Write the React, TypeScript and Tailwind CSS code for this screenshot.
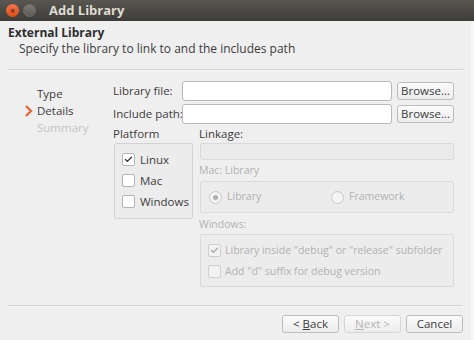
import { Check } from "lucide-react";

const font = { fontFamily: '"Open Sans", "Noto Sans", "DejaVu Sans", sans-serif' };

function Button({ children, disabled, className = "" }: { children: React.ReactNode; disabled?: boolean; className?: string }) {
  return (
    <div
      className={`flex items-center justify-center whitespace-nowrap rounded-[3px] border bg-gradient-to-b from-[#fbfbfb] to-[#ececec] text-[11.5px] ${
        disabled ? "border-[#d6d6d6] text-[#b4b4b4]" : "border-[#bdbdbd] text-[#3c3c3c]"
      } ${className}`}
    >
      {children}
    </div>
  );
}

function CheckBox({ checked, disabled }: { checked?: boolean; disabled?: boolean }) {
  return (
    <span
      className={`flex h-[13px] w-[13px] shrink-0 items-center justify-center rounded-[2px] border ${
        disabled ? "border-[#cfcfcf] bg-[#f2f2f2]" : "border-[#b5b5b5] bg-white"
      }`}
    >
      {checked && <Check className={`h-[9px] w-[9px] ${disabled ? "text-[#a8a8a8]" : "text-[#333]"}`} strokeWidth={3.5} />}
    </span>
  );
}

function Radio({ checked }: { checked?: boolean }) {
  return (
    <span className="flex h-[13px] w-[13px] shrink-0 items-center justify-center rounded-full border border-[#c8c8c8] bg-[#f4f4f4]">
      {checked && <span className="h-[5px] w-[5px] rounded-full bg-[#b0b0b0]" />}
    </span>
  );
}

export default function App() {
  return (
    <div className="flex h-[340px] w-[474px] flex-col overflow-hidden bg-[#efefef] text-[#3c3c3c]" style={font}>
      {/* title bar */}
      <div className="flex h-[21px] shrink-0 items-center bg-gradient-to-b from-[#5a5752] to-[#3d3c38] pl-[6px]">
        <span className="flex h-[13px] w-[13px] items-center justify-center rounded-full bg-gradient-to-b from-[#f2764c] to-[#df4b14] text-[9px] font-bold leading-none text-[#6b2a10]">
          ×
        </span>
        <span className="ml-[4px] h-[13px] w-[13px] rounded-full border border-[#6e6c67] bg-gradient-to-b from-[#7d7b75] to-[#5d5b56]" />
        <span className="ml-[13px] text-[13px] font-bold text-[#dfdbd2]">Add Library</span>
      </div>

      <div className="flex flex-1 flex-col border-r-[3px] border-[#f7f7f7]">
        {/* header */}
        <div className="flex flex-col px-[8px] pt-[4px]">
          <div className="text-[12px] font-bold leading-[16px] text-[#2e2e2e]">External Library</div>
          <div className="pl-[11px] text-[12px] leading-[16px] text-[#3c3c3c]">Specify the library to link to and the includes path</div>
        </div>
        <div className="mx-[8px] mt-[12px] h-[2px] border-t border-[#d2d2d2] bg-[#f7f7f7]" />

        {/* content */}
        <div className="flex h-[222px]">
          <div className="w-[113px] shrink-0 pt-[14px] text-[11.5px] leading-[17px]">
            <div className="pl-[37px]">Type</div>
            <div className="flex items-center">
              <svg width="12" height="12" viewBox="0 0 12 12" className="ml-[23px] mr-[2px]">
                <path d="M3 1 L8 6 L3 11" fill="none" stroke="#df6a3b" strokeWidth="2.4" />
              </svg>
              <span>Details</span>
            </div>
            <div className="pl-[37px] text-[#c4c4c4]">Summary</div>
          </div>

          <div className="flex w-[342px] flex-col whitespace-nowrap pt-[10px] text-[11.5px]">
            <div className="flex h-[20px] items-center">
              <span className="w-[69px]">Library file:</span>
              <div className="h-[20px] w-[210px] rounded-[3px] border border-[#b9b9b9] bg-white" />
              <Button className="ml-[5px] h-[18px] w-[57px]">Browse...</Button>
            </div>
            <div className="mt-[3px] flex h-[20px] items-center">
              <span className="w-[69px]">Include path:</span>
              <div className="h-[20px] w-[210px] rounded-[3px] border border-[#b9b9b9] bg-white" />
              <Button className="ml-[5px] h-[18px] w-[57px]">Browse...</Button>
            </div>

            <div className="mt-[1px] flex gap-[6px]">
              <div className="w-[80px]">
                <div className="h-[18px] leading-[18px]">Platform</div>
                <div className="ml-[1px] flex h-[76px] flex-col justify-center gap-[6px] rounded-[2px] border border-[#d3d3d3] bg-[#ececec] pb-[2px] pl-[7px] leading-[15px]">
                  <label className="flex items-center gap-[5px]"><CheckBox checked />Linux</label>
                  <label className="flex items-center gap-[5px]"><CheckBox />Mac</label>
                  <label className="flex items-center gap-[5px]"><CheckBox />Windows</label>
                </div>
              </div>

              <div className="w-[255px] text-[10.5px] text-[#b2b2b2]">
                <div className="h-[18px] text-[11.5px] leading-[18px] text-[#3c3c3c]">Linkage:</div>
                <div className="ml-[1px] h-[17px] rounded-[2px] border border-[#dadada] bg-[#ebebeb]" />
                <div className="mt-[2px] h-[17px] leading-[17px]">Mac: Library</div>
                <div className="ml-[1px] mt-[2px] flex h-[32px] items-center rounded-[2px] border border-[#dadada] bg-[#ececec] pl-[8px]">
                  <label className="flex w-[122px] items-center gap-[5px]"><Radio checked />Library</label>
                  <label className="flex items-center gap-[5px]"><Radio />Framework</label>
                </div>
                <div className="mt-[3px] h-[17px] leading-[17px]">Windows:</div>
                <div className="ml-[1px] mt-[1px] flex h-[53px] flex-col justify-center gap-[7px] rounded-[2px] border border-[#dadada] bg-[#ececec] pl-[7px] leading-[14px]">
                  <label className="flex items-center gap-[4px]"><CheckBox checked disabled />Library inside "debug" or "release" subfolder</label>
                  <label className="flex items-center gap-[4px]"><CheckBox disabled />Add "d" suffix for debug version</label>
                </div>
              </div>
            </div>
          </div>
        </div>

        {/* bottom */}
        <div className="mx-[8px] mt-[12px] h-[2px] border-t border-[#d2d2d2] bg-[#f7f7f7]" />
        <div className="flex justify-end gap-[5px] pr-[8px] pt-[8px]">
          <Button className="h-[18px] w-[57px]">
            &lt; <span className="ml-[3px] underline">B</span>ack
          </Button>
          <Button disabled className="h-[18px] w-[57px]">
            <span className="underline">N</span>ext &gt;
          </Button>
          <Button className="h-[18px] w-[57px]">Cancel</Button>
        </div>
      </div>
    </div>
  );
}
